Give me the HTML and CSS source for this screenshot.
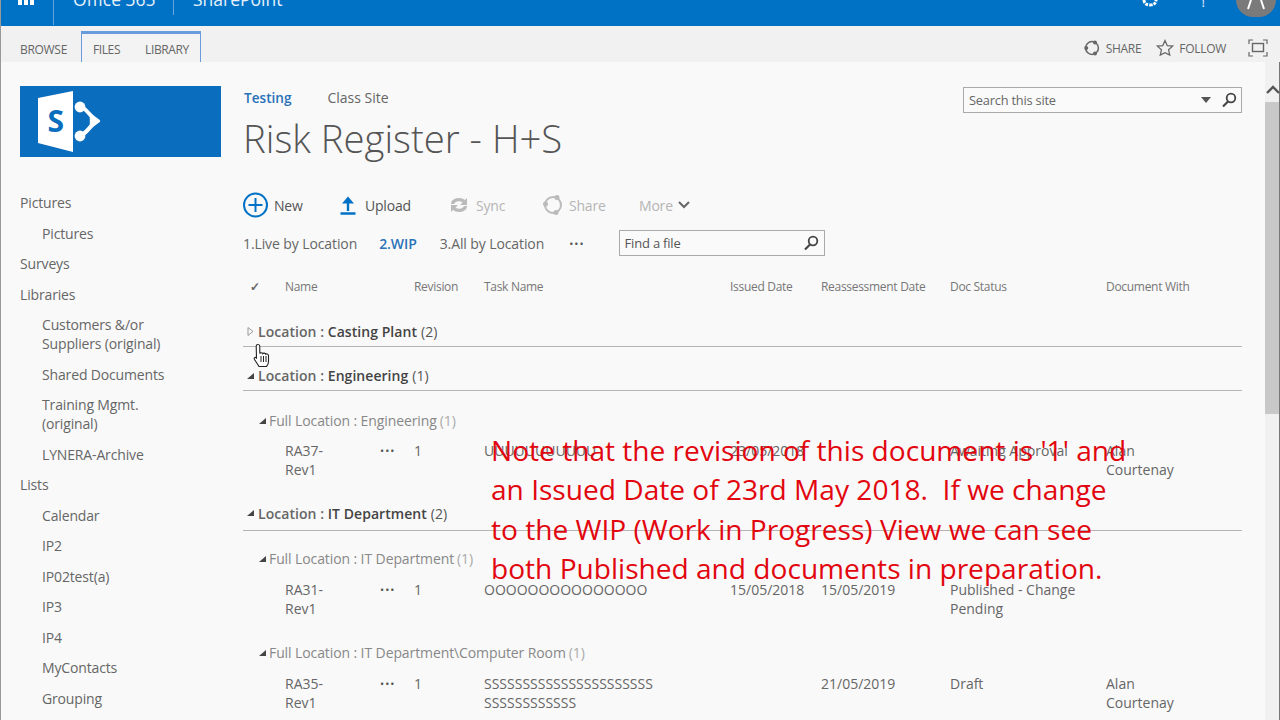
FILE: index.html
```html
<!DOCTYPE html>
<html lang="en">
<head>
<meta charset="utf-8">
<title>Risk Register - H+S</title>
<link rel="stylesheet" href="styles.css">
</head>
<body>
<header class="suitebar">
  <svg class="waffle" width="20" height="6" viewBox="0 0 20 6"><path d="M3 0h4v5H3zM9 0h4v5H9zM15 0h4v5h-4z" fill="#fff"/></svg>
  <span class="suite-sep s1"></span>
  <span class="suite-text">Office 365</span>
  <span class="suite-sep s2"></span>
  <span class="suite-text">SharePoint</span>
  <span class="suite-right">
    <svg class="gear" width="18" height="8" viewBox="0 0 18 8"><path d="M3 0c0 3 2 5 6 5s6-2 6-5" fill="none" stroke="#fff" stroke-width="3" stroke-dasharray="3 1"/></svg>
    <span class="help">!</span>
    <span class="avatar"><svg width="40" height="17" viewBox="0 0 40 17"><path d="M12 9l3-9M28 9l-3-9" stroke="#fff" stroke-width="2" fill="none"/></svg></span>
  </span>
</header>
<nav class="ribbon">
  <span class="tab first">BROWSE</span>
  <div class="tabgroup"><span class="tab">FILES</span><span class="tab">LIBRARY</span></div>
  <div class="ribbon-right">
    <span class="action"><svg width="18" height="18" viewBox="0 0 18 18"><circle cx="9" cy="9" r="6.4" fill="none" stroke="#666" stroke-width="1.5"/><circle cx="3.2" cy="9" r="2" fill="#666"/><circle cx="12" cy="3.4" r="2" fill="#666"/><circle cx="12" cy="14.6" r="2" fill="#666"/></svg>SHARE</span>
    <span class="action"><svg width="18" height="18" viewBox="0 0 18 18"><path d="M9 1.5l2.2 5.1 5.5.5-4.2 3.6 1.300 5.400L9 13.700l-4.800 2.400 1.300-5.400L1.300 7.100l5.500-.5z" fill="none" stroke="#666" stroke-width="1.2"/></svg>FOLLOW</span>
    <svg class="focus" width="20" height="18" viewBox="0 0 20 18"><path d="M1 5V1h4M15 1h4v4M19 13v4h-4M5 17H1v-4" fill="none" stroke="#666" stroke-width="1.2"/><rect x="4.5" y="4.5" width="11" height="8" fill="none" stroke="#666" stroke-width="1.4"/></svg>
  </div>
</nav>
<div class="workspace">
  <div class="page">
    <aside class="sidebar">
      <div class="logo">
        <svg width="64" height="62" viewBox="0 0 64 62">
          <path d="M0 7L35 0v61L0 52z" fill="#fff"/>
          <text x="9.500" y="41" class="logo-s">S</text>
          <path d="M42 15c5 2 10 8 15 15-5 7-10 13-15 15" fill="none" stroke="#fff" stroke-width="4"/>
          <circle cx="42" cy="16" r="5.400" fill="#fff"/>
          <circle cx="42" cy="45" r="5.400" fill="#fff"/>
          <path d="M53 24l8 6-8 6z" fill="#fff" stroke="#fff" stroke-width="2.400" stroke-linejoin="round"/>
        </svg>
      </div>
      <ul class="nav">
        <li class="h">Pictures</li>
        <li>Pictures</li>
        <li class="h">Surveys</li>
        <li class="h">Libraries</li>
        <li>Customers &amp;/or<br>Suppliers (original)</li>
        <li>Shared Documents</li>
        <li>Training Mgmt.<br>(original)</li>
        <li>LYNERA-Archive</li>
        <li class="h">Lists</li>
        <li>Calendar</li>
        <li>IP2</li>
        <li>IP02test(a)</li>
        <li>IP3</li>
        <li>IP4</li>
        <li>MyContacts</li>
        <li>Grouping</li>
      </ul>
    </aside>
    <main class="content">
      <div class="top">
        <div class="titles">
          <div class="crumbs"><a class="crumb-link">Testing</a><span>Class Site</span></div>
          <h1>Risk Register - H+S</h1>
        </div>
        <div class="searchbox site"><span>Search this site</span>
          <svg class="caret" width="10" height="6" viewBox="0 0 10 6"><path d="M0 0h10L5 6z" fill="#555"/></svg>
          <svg width="16" height="16" viewBox="0 0 16 16"><circle cx="10" cy="6" r="4.300" fill="none" stroke="#444" stroke-width="1.800"/><path d="M7 9.500L2 14.500" stroke="#444" stroke-width="2.200"/></svg>
        </div>
      </div>
      <div class="commands">
        <span class="cmd new"><svg width="26" height="26" viewBox="0 0 26 26"><circle cx="12.500" cy="13" r="11.500" fill="none" stroke="#0072c6" stroke-width="2"/><path d="M12.500 6v14M5.500 13h14" stroke="#0072c6" stroke-width="2"/></svg>New</span>
        <span class="cmd upload"><svg width="18" height="20" viewBox="0 0 18 20"><path d="M9 1.500L3 8.500h12z" fill="#0072c6"/><path d="M9 7v9M1.500 18.500h15" stroke="#0072c6" stroke-width="2.400"/></svg>Upload</span>
        <span class="cmd sync off"><svg width="20" height="20" viewBox="0 0 20 20"><path d="M2 9a8 6 0 0 1 14-4l2-2v7h-7l2.500-2.500A5 4 0 0 0 5 9zM18 11a8 6 0 0 1-14 4l-2 2v-7h7l-2.500 2.500A5 4 0 0 0 15 11z" fill="#bbb"/></svg>Sync</span>
        <span class="cmd share off"><svg width="22" height="22" viewBox="0 0 22 22"><circle cx="11" cy="11" r="8" fill="none" stroke="#bbb" stroke-width="2"/><circle cx="3.500" cy="10" r="2.500" fill="#bbb"/><circle cx="15" cy="3.500" r="2.500" fill="#bbb"/><circle cx="14" cy="18.500" r="2.500" fill="#bbb"/></svg>Share</span>
        <span class="cmd more off">More<svg width="12" height="8" viewBox="0 0 12 8"><path d="M1 1l5 5 5-5" fill="none" stroke="#666" stroke-width="2"/></svg></span>
      </div>
      <div class="views">
        <span class="view">1.Live by Location</span>
        <span class="view on">2.WIP</span>
        <span class="view">3.All by Location</span>
        <span class="dots more-views">•••</span>
        <div class="searchbox file"><span>Find a file</span>
          <svg width="16" height="16" viewBox="0 0 16 16"><circle cx="10" cy="6" r="4.300" fill="none" stroke="#444" stroke-width="1.800"/><path d="M7 9.500L2 14.500" stroke="#444" stroke-width="2.200"/></svg>
        </div>
      </div>
      <div class="row head">
        <span class="check">✓</span><span>Name</span><span></span><span>Revision</span><span>Task Name</span><span>Issued Date</span><span>Reassessment Date</span><span>Doc Status</span><span>Document With</span>
      </div>
      <div class="group g1"><svg class="tri" width="7" height="9" viewBox="0 0 7 9"><path d="M1 .5l5 4-5 4z" fill="none" stroke="#999"/></svg><b><em>Location :</em> Casting Plant</b> <i>(2)</i></div>
      <div class="group g2"><svg class="tri" width="7" height="7" viewBox="0 0 7 7"><path d="M7 0v6H0z" fill="#444"/></svg><b><em>Location :</em> Engineering</b> <i>(1)</i></div>
      <div class="sub s-eng"><svg class="tri" width="7" height="7" viewBox="0 0 7 7"><path d="M7 0v6H0z" fill="#444"/></svg>Full Location : Engineering <i>(1)</i></div>
      <div class="row item">
        <span></span><span>RA37-<br>Rev1</span><span class="dots">•••</span><span>1</span><span>UUUUUUUUUUU</span><span>23/05/2018</span><span></span><span>Awaiting Approval</span><span>Alan<br>Courtenay</span>
      </div>
      <div class="group g3"><svg class="tri" width="7" height="7" viewBox="0 0 7 7"><path d="M7 0v6H0z" fill="#444"/></svg><b><em>Location :</em> IT Department</b> <i>(2)</i></div>
      <div class="sub s-it"><svg class="tri" width="7" height="7" viewBox="0 0 7 7"><path d="M7 0v6H0z" fill="#444"/></svg>Full Location : IT Department <i>(1)</i></div>
      <div class="row item">
        <span></span><span>RA31-<br>Rev1</span><span class="dots">•••</span><span>1</span><span>OOOOOOOOOOOOOOO</span><span>15/05/2018</span><span>15/05/2019</span><span>Published - Change<br>Pending</span><span></span>
      </div>
      <div class="sub s-cr"><svg class="tri" width="7" height="7" viewBox="0 0 7 7"><path d="M7 0v6H0z" fill="#444"/></svg>Full Location : IT Department\Computer Room <i>(1)</i></div>
      <div class="row item">
        <span></span><span>RA35-<br>Rev1</span><span class="dots">•••</span><span>1</span><span>SSSSSSSSSSSSSSSSSSSSSS<br>SSSSSSSSSSSS</span><span></span><span>21/05/2019</span><span>Draft</span><span>Alan<br>Courtenay</span>
      </div>
    </main>
  </div>
  <div class="scrollbar">
    <svg class="up" width="14" height="9" viewBox="0 0 14 9"><path d="M1 8l6-6 6 6" fill="none" stroke="#555" stroke-width="2.400"/></svg>
    <div class="thumb"></div>
  </div>
</div>
<div class="note"><span>Note that the revision of this document is '1' and</span><span>an Issued Date of 23rd May 2018.  If we change</span><span>to the WIP (Work in Progress) View we can see</span><span>both Published and documents in preparation.</span></div>
<svg class="pointer" width="18" height="26" viewBox="0 0 18 26"><path d="M5 1.500c1.200 0 1.800.8 1.800 2v7c.3-1 2.600-1 3 .2.500-.9 2.500-.8 2.900.5.700-.6 2.600-.3 2.800 1.300v6c0 2.500-1 4-2 5H6c-1-2-3-4.500-4.500-7-.8-1.500.6-2.800 2-1.500l-.3-12c0-1.200.8-1.500 1.800-1.500z" fill="#fff" stroke="#222" stroke-width="1.100"/><path d="M8 13v6M10.500 13v6M13 13v6" stroke="#222"/></svg>
</body>
</html>
```
FILE: styles.css
```css
* { box-sizing: border-box; }
html, body { margin: 0; height: 720px; overflow: hidden; }
body {
  display: flex; flex-direction: column; width: 1280px;
  font-family: "Open Sans", "Noto Sans", sans-serif;
  font-size: 14px; color: #666; background: #f9f9f9;
  position: relative; border-left: 1px solid #999;
}
ul { list-style: none; margin: 0; padding: 0; }
h1 { margin: 0; font-weight: 300; }
i, em { font-style: normal; }
i { font-weight: 400; }

.suitebar {
  height: 26px; background: #0072c6; color: #e6f1fa; flex: none;
  display: flex; align-items: flex-start; overflow: hidden; padding-left: 15px;
  margin-left: -1px;
}
.waffle { flex: none; }
.suite-sep { width: 1px; background: #5ea6dc; flex: none; }
.suite-sep.s1 { margin-left: 18px; height: 25px; }
.suite-sep.s2 { margin-left: 1px; height: 15px; }
.suite-text { font-size: 17.500px; line-height: 26px; margin: -14px 0 0 19px; width: 99px; white-space: nowrap; flex: none; }
.suite-right { margin-left: auto; display: flex; align-items: flex-start; height: 26px; }
.gear { margin-right: 43px; }
.help { font-size: 13px; line-height: 10px; margin-right: 31px; height: 10px; margin-top: -3px; }
.avatar { width: 40px; height: 17px; background: #7a7a7a; border-radius: 0 0 20px 20px; margin-right: 4px; overflow: hidden; display: block; }

.ribbon {
  height: 36px; flex: none; background: #f1f1f1; display: flex; align-items: flex-start;
  padding: 0 12px 0 19px; font-size: 12px;
}
.tab { line-height: 14px; letter-spacing: -.4px; color: #666; padding-top: 17px; display: block; }
.tab.first { width: 61px; letter-spacing: -.3px; }
.tabgroup {
  display: flex; gap: 25px; height: 32px; margin-top: 5px; padding: 0 11px;
  border: 1px solid #6a9bdc; border-top-width: 3px; border-bottom: 0; background: #f3f3f3;
}
.tabgroup .tab { padding-top: 9px; }
.ribbon-right { margin-left: auto; display: flex; align-items: center; height: 36px; margin-top: 4px; }
.action { display: flex; align-items: center; gap: 5px; letter-spacing: -.3px; margin-right: 15px; height: 18px; }
.focus { margin-left: 7px; }

.workspace { flex: 1; display: flex; min-height: 0; overflow: hidden; }
.page { flex: none; width: 1264px; display: flex; background: #f9f9f9; }
.sidebar { width: 242px; flex: none; padding: 24px 0 0 19px; }
.logo { width: 201px; height: 71px; background: #0a6dbd; padding: 5px 0 0 18px; }
.logo svg { display: block; }
.logo-s { font: 700 30px "Open Sans", sans-serif; fill: #0a6dbd; }
.nav { margin-top: 30px; font-size: 14px; line-height: 19px; letter-spacing: -.15px; }
.nav li { padding: 6px 0 5.500px 22px; }
.nav li.h { padding-left: 0; }

.content { flex: 1; min-width: 0; padding-right: 23px; }
.top { display: flex; justify-content: space-between; padding-top: 26px; height: 128px; }
.crumbs { display: flex; gap: 36px; font-size: 14px; line-height: 20px; padding-left: 1px; }
.crumb-link { color: #2a72b8; font-weight: 600; font-size: 13.600px; }
h1 { font-size: 38.300px; line-height: 44px; color: #555; margin-top: 8px; white-space: nowrap; }
.searchbox { border: 1px solid #aaa; background: #fafafa; display: flex; align-items: center; font-size: 13px; letter-spacing: -.2px; }
.searchbox span { flex: 1; }
.searchbox.site { width: 279px; height: 26px; padding: 0 4px 0 5px; margin-top: -1px; font-size: 12.800px; }
.searchbox.site .caret { margin-right: 10px; }
.searchbox.file { width: 206px; height: 26px; padding: 0 5px; margin-left: 34px; color: #555; }

.commands { display: flex; align-items: center; height: 30px; font-size: 14px; letter-spacing: -.2px; }
.cmd { display: flex; align-items: center; color: #555; white-space: nowrap; }
.cmd.off { color: #b5b5b5; }
.new { gap: 5px; width: 96px; }
.upload { gap: 8px; width: 110px; }
.sync { gap: 7px; width: 93px; }
.share { gap: 5px; width: 97px; }
.more { gap: 5px; }
.views { display: flex; align-items: center; height: 26px; margin-top: 10px; font-size: 14px; letter-spacing: -.1px; }
.view { white-space: nowrap; margin-right: 22px; }
.view.on { color: #2a72b8; font-weight: 600; margin-right: 23px; }
.dots { font-size: 11px; letter-spacing: 1px; color: #555; white-space: nowrap; }
.more-views { margin-left: 3px; }

.row {
  display: grid;
  grid-template-columns: 42px 95px 34px 70px 246px 91px 129px 156px 136px;
  font-size: 14px; line-height: 19px;
}
.row > span { white-space: nowrap; }
.head { height: 32px; margin-top: 16px; font-size: 12px; line-height: 30px; letter-spacing: -.3px; color: #777; }
.check { padding-left: 7px; color: #666; font-weight: 700; }
.item { height: 39px; }
.group { font-size: 14px; line-height: 20px; letter-spacing: .05px; color: #444; border-bottom: 1px solid #b5b5b5; white-space: nowrap; display: flex; align-items: center; gap: 4px; }
.group b { font-weight: 600; }
.group em { color: #666; }
.group i { color: #555; }
.group .tri { margin-left: 4px; }
.g1 { height: 30px; margin-top: 13px; }
.g2 { height: 29px; margin-top: 15px; }
.g3 { height: 32px; margin-top: 19px; padding-bottom: 2px; }
.sub { color: #888; font-size: 14px; line-height: 20px; letter-spacing: -.1px; white-space: nowrap; display: flex; align-items: center; gap: 3px; padding-left: 16px; height: 20px; }
.sub i { color: #aaa; }
.s-eng { margin-top: 20px; margin-bottom: 10px; }
.s-it { margin-top: 18px; margin-bottom: 11px; }
.s-cr { margin-top: 24px; margin-bottom: 11px; }

.scrollbar { width: 15px; flex: none; background: #f1f1f1; border-right: 1px solid #777; }
.up { display: block; margin: 23px 0 0 1px; }
.thumb { background: #c8c8c8; height: 312px; margin-top: 8px; }

.note {
  position: absolute; left: 490px; top: 431px; color: #e2060f;
  font-size: 28.100px; line-height: 39.300px; font-weight: 500;
}
.note span { display: block; white-space: pre; }
.pointer { position: absolute; left: 252px; top: 343px; }
```
